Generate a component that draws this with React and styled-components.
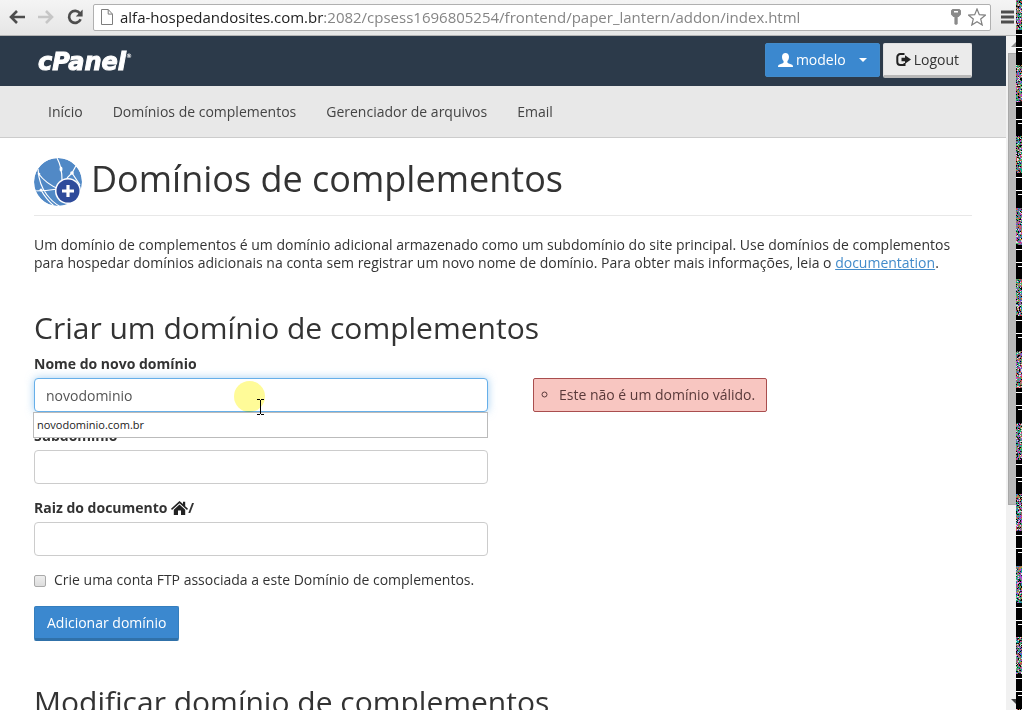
import React from "react";
import styled, { createGlobalStyle } from "styled-components";

const GlobalStyle = createGlobalStyle`
    * {
        box-sizing: border-box;
    }

    body {
        margin: 0;
        color: #333;
        background: #fff;
        font-family: "Open Sans", "Noto Sans", sans-serif;
        font-size: 14px;
        line-height: 18px;
    }

    input, button {
        font: inherit;
    }
`

function BackIcon({ color }) {
    return (
        <svg width="16" height="14" viewBox="0 0 16 14" fill="none" stroke={color} strokeWidth="2.6">
            <path d="M8 1 2 7l6 6M2 7h14" />
        </svg>
    )
}

function ForwardIcon() {
    return (
        <svg width="16" height="14" viewBox="0 0 16 14" fill="none" stroke="#c6c6c6" strokeWidth="2.6">
            <path d="m8 1 6 6-6 6M14 7H0" />
        </svg>
    )
}

function ReloadIcon() {
    return (
        <svg width="16" height="16" viewBox="0 0 16 16">
            <path d="M13 4.4A6 6 0 1 0 13.6 10.2" fill="none" stroke="#4d4d4d" strokeWidth="2.7" />
            <path d="M15.6.6v7H8.8z" fill="#4d4d4d" />
        </svg>
    )
}

function PageIcon() {
    return (
        <svg width="12" height="16" viewBox="0 0 12 16" fill="#fff" stroke="#7d7d7d">
            <path d="M.5.5h6.7l4.3 4.6v10.4H.5zM7.2.5v4.6h4.3" />
        </svg>
    )
}

function KeyIcon() {
    return (
        <svg width="10" height="16" viewBox="0 0 10 16">
            <path fill="#8a8a8a" fillRule="evenodd" d="M1.5 0h7L10 1.5v4L7.6 8H6.7v7L5 16l-1.6-1V8H2.4L0 5.5v-4zM3 2v1.5h4V2z" />
        </svg>
    )
}

function StarIcon() {
    return (
        <svg width="18" height="18" viewBox="0 0 18 18">
            <path d="m9 1 2.3 5.7 6.1.4-4.7 3.9 1.5 6L9 13.7 3.8 17l1.500-6L.6 7.100l6.100-.4z" fill="#fff" stroke="#808080" strokeWidth="1.2" />
        </svg>
    )
}

function UserIcon() {
    return (
        <svg width="15" height="14" viewBox="0 0 15 14">
            <path fill="currentColor" d="M7.5 0C9.6 0 11 1.6 11 3.8c0 1.700-.5 3.200-1.600 4.300v1.100c0 .5.3.8.8 1l3.300 1.400c1 .4 1.500 1 1.500 2.400H0c0-1.400.5-2 1.500-2.400l3.300-1.400c.5-.2.8-.5.8-1V8.100C4.500 7 4 5.500 4 3.800 4 1.600 5.400 0 7.500 0z" />
        </svg>
    )
}

function LogoutIcon() {
    return (
        <svg width="15" height="13" viewBox="0 0 15 13">
            <path d="M8.5 1.100H4.300a3 3 0 0 0-3 3v4.800a3 3 0 0 0 3 3h4.200V10" fill="none" stroke="#222" strokeWidth="2" />
            <path d="M5.5 4.800H9V2.200l6 4.300-6 4.300V8.200H5.500z" fill="#222" />
        </svg>
    )
}

function HomeIcon() {
    return (
        <svg width="17" height="14" viewBox="0 0 17 14" fill="#222">
            <path d="M8.5 0 12 3.100V.8h2.200v4.400L17 7.800l-1 1.100-7.500-6.700L1 8.900 0 7.800z" />
            <path d="m8.5 3.600 5.700 5.100V14H10V9.500H7V14H2.800V8.700z" />
        </svg>
    )
}

function GlobeIcon() {
    return (
        <svg width="48" height="48" viewBox="0 0 48 48">
            <clipPath id="globe">
                <circle cx="24" cy="24" r="24" />
            </clipPath>
            <g clipPath="url(#globe)">
                <circle cx="24" cy="24" r="24" fill="#5189c6" />
                <g fill="none" stroke="#fff" strokeWidth="1.2">
                    <path d="M23 0q5 9 5 22M44 4l-6 11q-5 4-7 9M4 11q1 16 9 26 6 8 14 12M0 33q12 0 24-2M4 15q8 11 21 16M7 32q5 9 13 16M38 15l8 12" />
                </g>
                <g fill="#fff">
                    <ellipse cx="27" cy="11" rx="1.500" ry="2.500" />
                    <circle cx="38" cy="15" r="1.800" />
                    <circle cx="7" cy="32" r="1.500" />
                    <circle cx="5" cy="16" r="1.300" />
                </g>
            </g>
            <circle cx="34" cy="33" r="13" fill="#fff" />
            <circle cx="34" cy="33" r="11.5" fill="#2e4b9b" />
            <path d="M34 27v12M28 33h12" stroke="#fff" strokeWidth="3.2" />
        </svg>
    )
}

// bands of coloured static on black, repeated down the edge of the window
const staticColors = ["#000", "#c45", "#4b6", "#56c", "#ddd", "#0a8", "#b4c", "#777", "#222", "#b84"];
const bands = Array.from({ length: 16 }, (_, i) => Math.round(i * 71.6 - 7));

function EdgeStatic() {
    let seed = 7;
    const next = () => {
        seed = (seed * 16807) % 2147483647;
        return seed;
    };
    const dots = [];
    bands.forEach((top) => {
        for (let y = 0; y < 37; y++) {
            for (let x = 0; x < 6; x++) {
                dots.push(<rect key={`${top}-${y}-${x}`} x={x} y={top + y} width="1" height="1" fill={staticColors[next() % 10]} />);
            }
        }
    });
    return (
        <StaticStrip aria-hidden="true">
            <svg width="6" height="1120" shapeRendering="crispEdges">
                {dots}
                {bands.map((top) => (
                    <path key={top} d={`M0 ${top + 41}h6M0 ${top + 54}h6M2 ${top + 58}h4`} stroke="#fff" />
                ))}
            </svg>
        </StaticStrip>
    )
}

function BrowserBar() {
    return (
        <Toolbar>
            <ToolButton aria-label="Voltar"><BackIcon color="#4d4d4d" /></ToolButton>
            <ToolButton aria-label="Avançar"><ForwardIcon /></ToolButton>
            <ToolButton aria-label="Recarregar"><ReloadIcon /></ToolButton>
            <AddressBar>
                <PageIcon />
                <Url><b>alfa-hospedandosites.com.br</b>:2082/cpsess1696805254/frontend/paper_lantern/addon/index.html</Url>
                <KeyIcon />
                <StarIcon />
            </AddressBar>
            <MenuButton aria-label="Menu">
                <svg width="13" height="14" viewBox="0 0 13 14" stroke="#4d4d4d" strokeWidth="3">
                    <path d="M0 2h13M0 7h13M0 12h13" />
                </svg>
            </MenuButton>
        </Toolbar>
    )
}

function Scrollbar() {
    return (
        <ScrollTrack aria-hidden="true">
            <ScrollEnd><path d="m4 11 5-5v5z" fill="#888" /></ScrollEnd>
            <ScrollThumb />
            <ScrollEnd><path d="M4 6h5v5z" fill="#444" /></ScrollEnd>
        </ScrollTrack>
    )
}

function Header() {
    return (
        <TopBar>
            <Logo>cPanel<sup>®</sup></Logo>
            <Actions>
                <UserButton><UserIcon /> modelo <Caret /></UserButton>
                <LogoutButton><LogoutIcon /> Logout</LogoutButton>
            </Actions>
        </TopBar>
    )
}

function DomainForm() {
    return (
        <form>
            <Columns>
                <div>
                    <Field>
                        <Label htmlFor="domain">Nome do novo domínio</Label>
                        <TextInput id="domain" $focused defaultValue="novodominio" autoComplete="off" />
                        <Suggestion>novodominio.com.br</Suggestion>
                        <ClickSpot />
                        <Cursor viewBox="0 0 7 16">
                            <path d="M0 .5h3M4 .5h3M3.5 1v14M0 15.5h3M4 15.5h3" stroke="#000" />
                        </Cursor>
                    </Field>
                    <Field>
                        <Label htmlFor="subdomain">Subdomínio</Label>
                        <TextInput id="subdomain" />
                    </Field>
                    <Field>
                        <Label htmlFor="root-dir">Raiz do documento <HomeIcon />/</Label>
                        <TextInput id="root-dir" />
                    </Field>
                </div>
                <ErrorBox>
                    <li>Este não é um domínio válido.</li>
                </ErrorBox>
            </Columns>
            <CheckRow>
                <Checkbox type="checkbox" id="ftp" />
                <label htmlFor="ftp">Crie uma conta FTP associada a este Domínio de complementos.</label>
            </CheckRow>
            <SubmitButton type="button">Adicionar domínio</SubmitButton>
        </form>
    )
}

function App() {
    return (
        <Window>
            <GlobalStyle />
            <Main>
                <BrowserBar />
                <Viewport>
                    <Page>
                        <Header />
                        <Nav>
                            <a href="#inicio">Início</a>
                            <a href="#dominios">Domínios de complementos</a>
                            <a href="#arquivos">Gerenciador de arquivos</a>
                            <a href="#email">Email</a>
                        </Nav>
                        <Content>
                            <PageTitle>
                                <GlobeIcon />
                                <h1>Domínios de complementos</h1>
                            </PageTitle>
                            <Intro>
                                Um domínio de complementos é um domínio adicional armazenado como um subdomínio do site principal. Use domínios de complementos para hospedar domínios adicionais na conta sem registrar um novo nome de domínio. Para obter mais informações, leia o <a href="#documentation">documentation</a>.
                            </Intro>
                            <SectionTitle>Criar um domínio de complementos</SectionTitle>
                            <DomainForm />
                            <SectionTitle>Modificar domínio de complementos</SectionTitle>
                        </Content>
                    </Page>
                    <Scrollbar />
                </Viewport>
            </Main>
            <EdgeStatic />
        </Window>
    )
}

const Window = styled.div`
    display: flex;
    height: 100vh;
    overflow: hidden;
`

const Main = styled.div`
    display: flex;
    flex: 1;
    flex-direction: column;
    min-width: 0;
`

const StaticStrip = styled.div`
    flex: none;
    width: 6px;
    overflow: hidden;
    background: #000;

    svg {
        display: block;
    }
`

const Toolbar = styled.div`
    display: flex;
    flex: none;
    align-items: center;
    gap: 13px;
    height: 36px;
    padding: 0 0 1px 9px;
    background: linear-gradient(#f4f4f4, #e6e6e6);
    border-bottom: 1px solid #b4b4b4;
`

const ToolButton = styled.button`
    display: flex;
    padding: 0;
    border: 0;
    background: none;
`

const MenuButton = styled(ToolButton)`
    margin-left: -3px;
    padding-right: 2px;
`

const AddressBar = styled.div`
    display: flex;
    flex: 1;
    align-items: center;
    gap: 7px;
    min-width: 0;
    height: 27px;
    margin-left: -3px;
    padding: 0 4px 0 7px;
    background: #fff;
    border: 1px solid #b0b0b0;
    border-radius: 2px;
`

const Url = styled.span`
    flex: 1;
    overflow: hidden;
    color: #858585;
    font-size: 15px;
    line-height: 24px;
    white-space: nowrap;

    b {
        color: #222;
        font-weight: 400;
    }
`

const Viewport = styled.div`
    display: flex;
    flex: 1;
    min-height: 0;
`

const Page = styled.div`
    flex: 1;
    min-width: 0;
    overflow: hidden;
`

const ScrollTrack = styled.div`
    display: flex;
    flex: none;
    flex-direction: column;
    width: 10px;
    padding-left: 1px;
    background: #f1f1f1;
`

const ScrollEnd = styled.svg`
    flex: none;
    width: 9px;
    height: 17px;
`

const ScrollThumb = styled.div`
    height: 67%;
    margin: 0 0 auto 1px;
    background: #b9b9b9;
    border: 1px solid #a8a8a8;
    border-right: 0;
`

const TopBar = styled.header`
    display: flex;
    align-items: flex-start;
    justify-content: space-between;
    height: 50px;
    padding: 7px 34px 0 38px;
    background: #2c3a4a;
`

const Logo = styled.div`
    color: #fff;
    font-family: "DejaVu Sans", sans-serif;
    font-size: 24px;
    font-style: italic;
    font-weight: 700;
    line-height: 38px;
    -webkit-text-stroke: 1px #fff;

    sup {
        font-size: 6px;
        line-height: 0;
        vertical-align: 12px;
        -webkit-text-stroke: 0;
    }
`

const Actions = styled.div`
    display: flex;
    gap: 3px;
`

const Button = styled.button`
    display: flex;
    align-items: center;
    gap: 3px;
    height: 34px;
    padding: 0 12px;
    border: 1px solid #357ebd;
    border-radius: 2px;
    color: #fff;
    background: #3b88cf;
`

const UserButton = styled(Button)`
    border-color: #428bca;
`

const LogoutButton = styled(Button)`
    height: 35px;
    color: #333;
    background: #ebebeb;
    border: 1px solid #e0e0e0;
    border-bottom: 3px solid #b8b8b8;
`

const Caret = styled.span`
    margin-left: 10px;
    border: 4px solid transparent;
    border-top-color: #fff;
    border-bottom: 0;
`

const Nav = styled.nav`
    display: flex;
    align-items: center;
    gap: 30px;
    height: 52px;
    padding: 0 48px;
    background: #e8e8e8;
    border-bottom: 1px solid #ccc;

    a {
        color: #444;
        text-decoration: none;
    }
`

const Content = styled.main`
    padding: 20px 34px;
`

const PageTitle = styled.div`
    display: flex;
    gap: 9px;
    height: 58px;
    margin-bottom: 20px;
    border-bottom: 1px solid #e8e8e8;

    h1 {
        margin: 0;
        font-size: 36px;
        font-weight: 400;
        line-height: 42px;
    }
`

const Intro = styled.p`
    margin: 0 0 36px;

    a {
        color: #428bca;
    }
`

const SectionTitle = styled.h2`
    margin: 0 0 7px;
    font-size: 30px;
    font-weight: 400;
    line-height: 40px;
`

const Columns = styled.div`
    display: grid;
    grid-template-columns: 1fr 1fr;
    column-gap: 30px;
    align-items: start;
`

const Field = styled.div`
    position: relative;
    margin-bottom: 15px;
`

const Label = styled.label`
    display: block;
    margin-bottom: 5px;
    font-weight: 700;

    svg {
        vertical-align: -2px;
    }
`

const TextInput = styled.input`
    display: block;
    width: 100%;
    height: 34px;
    padding: 0 11px;
    color: #555;
    background: #fff;
    border: 1px solid ${props => props.$focused ? "#66afe9" : "#ccc"};
    border-radius: 4px;
    outline: 0;
    box-shadow: ${props => props.$focused ? "0 0 8px rgba(102, 175, 233, 0.6)" : "none"};
`

const Suggestion = styled.div`
    position: absolute;
    z-index: 1;
    top: 100%;
    left: -1px;
    right: 0;
    height: 26px;
    padding: 0 3px;
    color: #222;
    font-size: 11px;
    line-height: 24px;
    background: #fff;
    border: 1px solid #bbb;
`

const ClickSpot = styled.div`
    position: absolute;
    top: 26px;
    left: 200px;
    width: 31px;
    height: 31px;
    border-radius: 50%;
    background: #fffb98;
    mix-blend-mode: multiply;
`

const Cursor = styled.svg`
    position: absolute;
    z-index: 2;
    top: 44px;
    left: 223px;
    width: 7px;
    height: 16px;
`

const ErrorBox = styled.ul`
    justify-self: start;
    height: 34px;
    margin: 23px 0 0 15px;
    padding: 0 11px 0 25px;
    color: #5a3a3a;
    line-height: 32px;
    list-style: circle;
    background: #f8c6c1;
    border: 1px solid #a94e4e;
    border-radius: 2px;
`

const CheckRow = styled.div`
    display: flex;
    align-items: center;
    gap: 8px;
    margin-bottom: 17px;
`

const Checkbox = styled.input`
    appearance: none;
    width: 12px;
    height: 12px;
    margin: 2px 0 0;
    background: linear-gradient(#eee, #ddd);
    border: 1px solid #aaa;
    border-radius: 2px;
`

const SubmitButton = styled(Button)`
    height: 35px;
    margin-bottom: 41px;
    border-bottom: 3px solid #3071a9;
`

export default App;
